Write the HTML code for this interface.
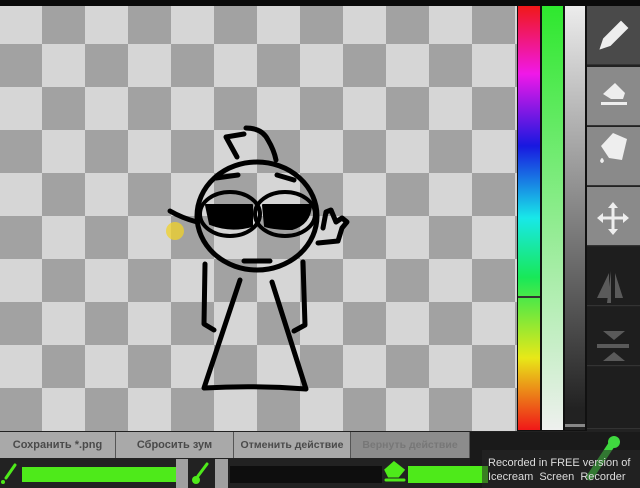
<!DOCTYPE html>
<html><head><meta charset="utf-8"><style>
*{margin:0;padding:0;box-sizing:border-box}
body{width:640px;height:488px;overflow:hidden;background:#222;position:relative;font-family:"Liberation Sans",sans-serif}
.a{position:absolute}
#cv{left:0;top:0;width:517px;height:431px;background-color:#d6d6d6;
background-image:conic-gradient(#a2a2a2 0 25%,transparent 0 50%,#a2a2a2 0 75%,transparent 0);
background-size:86px 86px;background-position:-1px 1px}
.tb{left:587px;width:53px;height:59px;border-bottom:1px solid #333}
.btn{top:432px;height:26px;background:#a9a9a9;color:#4a4a4a;font-size:11px;font-weight:bold;text-align:center;line-height:26px;border-right:1px solid #555;white-space:nowrap;overflow:hidden}
</style></head><body>
<div id="cv" class="a"></div>
<div class="a" style="left:0;top:0;width:640px;height:6px;background:#0a0a0a"></div>
<svg class="a" style="left:0;top:0" width="517" height="431" fill="none" stroke="#000" stroke-width="5" stroke-linecap="round" stroke-linejoin="round">
<path d="M237 157 L226 137 L244 134 M246 128 Q262 128 268 140 Q274 150 276 160"/>
<ellipse cx="257" cy="216" rx="60" ry="54"/>
<ellipse cx="230" cy="214" rx="30" ry="22" stroke-width="4"/>
<ellipse cx="285" cy="214" rx="30" ry="22" stroke-width="4"/>
<path d="M206 205 H252 V226 Q230 232 210 224 Z" fill="#000" stroke-width="2"/>
<path d="M263 205 H311 Q310 224 292 229 Q275 229 265 226 Z" fill="#000" stroke-width="2"/>
<path d="M216 178 L238 175 M277 175 L294 180 M244 261 L270 261"/>
<path d="M170 211 Q182 218 197 222"/>
<path d="M318 243 L338 241 L342 228 L347 222 L342 218 L336 222 L331 210 L326 212 L323 228"/>
<path d="M205 264 L204 324 L214 330 M240 280 L204 388 Q255 385 306 389 L272 282 M303 262 L305 325 L294 331"/>
</svg>
<div class="a" style="left:166px;top:222px;width:18px;height:18px;border-radius:50%;background:rgba(240,210,40,.75)"></div>
<div class="a" style="left:517px;top:6px;width:70px;height:425px;background:#111"></div>
<div class="a" style="left:518px;top:6px;width:22px;height:424px;background:linear-gradient(#f01818 0%,#f018e8 16%,#1818e0 33%,#18e8e8 50%,#18e858 64%,#e8e818 83%,#f01818 100%)"></div>
<div class="a" style="left:518px;top:296px;width:22px;height:2px;background:#333"></div>
<div class="a" style="left:542px;top:6px;width:21px;height:424px;background:linear-gradient(#2ee82e,#eef0ee)"></div>
<div class="a" style="left:565px;top:6px;width:20px;height:424px;background:linear-gradient(#ececec,#222 95%)"></div>
<div class="a" style="left:565px;top:424px;width:20px;height:3px;background:#888"></div>
<div class="a tb" style="top:6px;background:#4a4a4a"></div>
<div class="a tb" style="top:67px;background:#8a8a8a"></div>
<div class="a tb" style="top:127px;background:#8a8a8a"></div>
<div class="a tb" style="top:187px;background:#8a8a8a"></div>
<div class="a tb" style="top:247px;background:#1e1e1e"></div>
<div class="a tb" style="top:307px;background:#1e1e1e"></div>
<div class="a tb" style="top:367px;height:62px;background:#1e1e1e"></div>
<svg class="a" style="left:587px;top:6px" width="53" height="420" fill="#eee">
<path d="M14 42 L17 33 L34 16 L40 22 L23 39 Z M33 17 L39 23" stroke="#eee" stroke-width="2"/>
<path d="M16 88 L28 77 L38 87 L36 93 L24 93 Z M14 96 H40 V99 H14Z"/>
<path d="M14 140 L26 127 L40 133 L35 154 L22 152 Z M13 155 q2-6 4 0 q-2 4 -4 0z"/>
<path d="M26 200 V225 M14 212 H38" stroke="#eee" stroke-width="3"/>
<path d="M26 196 l-5 6 h10z M26 229 l-5-6 h10z M10 212 l6-5 v10z M42 212 l-6-5 v10z"/>
<path d="M24 265 V297 H20 M10 292 L22 267 V292Z M36 292 L28 267 V292Z" fill="#5a5a5a"/>
<path d="M16 325 H38 L27 334Z M10 338 H42 V342 H10Z M16 355 H38 L27 346Z" fill="#5a5a5a"/>
</svg>
<div class="a btn" style="left:0;width:116px">Сохранить *.png</div>
<div class="a btn" style="left:116px;width:118px">Сбросить зум</div>
<div class="a btn" style="left:234px;width:117px;font-size:10.5px">Отменить действие</div>
<div class="a btn" style="left:351px;width:119px;background:#8c8c8c;color:#777;font-size:10.5px">Вернуть действие</div>
<div class="a" style="left:470px;top:432px;width:170px;height:56px;background:#1a1a1a"></div>
<svg class="a" style="left:578px;top:432px" width="60" height="56"><path d="M34 12 L12 45" stroke="#3fd83f" stroke-width="7" stroke-linecap="round"/><circle cx="36" cy="10" r="6" fill="#3fd83f"/></svg>
<div class="a" style="left:22px;top:467px;width:154px;height:15px;background:#4eea1a"></div>
<div class="a" style="left:176px;top:459px;width:12px;height:29px;background:#a0a0a0"></div>
<div class="a" style="left:215px;top:459px;width:13px;height:29px;background:#a0a0a0"></div>
<div class="a" style="left:230px;top:466px;width:152px;height:17px;background:#0e0e0e"></div>
<div class="a" style="left:408px;top:466px;width:80px;height:17px;background:#4eea1a"></div>
<svg class="a" style="left:0;top:458px" width="420" height="30" fill="none" stroke="#4eea1a" stroke-width="3" stroke-linecap="round">
<path d="M6 20 L15 7"/><circle cx="3" cy="24" r="2" fill="#4eea1a" stroke="none"/>
<path d="M198 18 L207 6"/><circle cx="196" cy="22" r="4" fill="#4eea1a" stroke="none"/>
<path d="M386 12 L394 5 L403 12 L398 18 L389 18Z M386 22 H404" fill="#4eea1a"/>
</svg>
<div class="a" style="left:482px;top:450px;width:158px;height:38px;background:rgba(40,40,40,.55)"></div>
<div class="a" style="left:488px;top:456px;color:#ddd;font-size:11px;line-height:14px;white-space:nowrap">Recorded in FREE version of<br>Icecream&nbsp; Screen&nbsp; Recorder</div>
</body></html>
